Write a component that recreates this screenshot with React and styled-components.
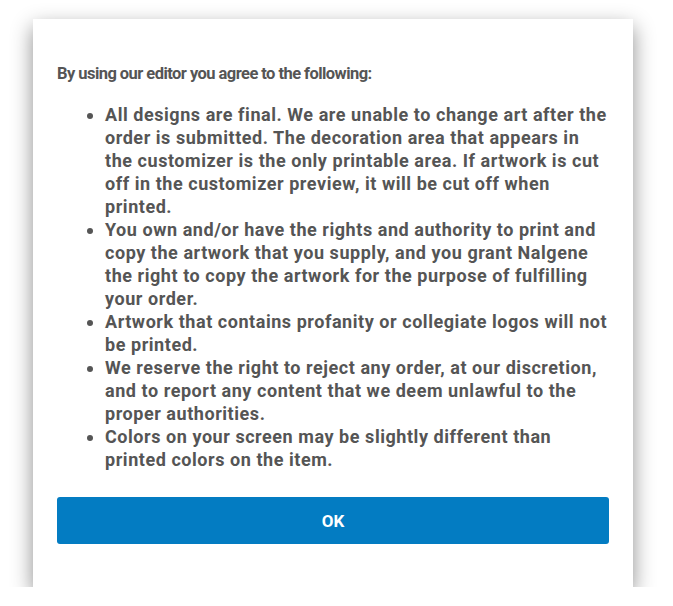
import React from "react";
import styled, { createGlobalStyle } from "styled-components";

const terms = [
  "All designs are final. We are unable to change art after the order is submitted. The decoration area that appears in the customizer is the only printable area. If artwork is cut off in the customizer preview, it will be cut off when printed.",
  "You own and/or have the rights and authority to print and copy the artwork that you supply, and you grant Nalgene the right to copy the artwork for the purpose of fulfilling your order.",
  "Artwork that contains profanity or collegiate logos will not be printed.",
  "We reserve the right to reject any order, at our discretion, and to report any content that we deem unlawful to the proper authorities.",
  "Colors on your screen may be slightly different than printed colors on the item.",
];

const App = () => {
  return (
    <>
      <GlobalStyle />
      <Page>
        <Modal>
          <Heading>By using our editor you agree to the following:</Heading>
          <TermsList>
            {terms.map((term, index) => (
              <TermItem key={index}>{term}</TermItem>
            ))}
          </TermsList>
          <OkButton type="button">OK</OkButton>
        </Modal>
      </Page>
    </>
  );
};

const GlobalStyle = createGlobalStyle`
  body {
    margin: 0;
    background: #ffffff;
    font-family: Roboto, "Liberation Sans", sans-serif;
  }
`;

const Page = styled.div`
  padding: 19px 0 0 33px;
`;

const Modal = styled.div`
  width: 600px;
  height: 568px;
  box-sizing: border-box;
  padding: 45px 24px 0 24px;
  background: #ffffff;
  box-shadow: 0 8px 20px rgba(0, 0, 0, 0.45);
`;

const Heading = styled.p`
  margin: 0;
  font-size: 16.5px;
  font-weight: 700;
  line-height: 20px;
  letter-spacing: -0.55px;
  color: #555555;
`;

const TermsList = styled.ul`
  margin: 19px 0 0;
  padding-left: 48px;
  list-style: disc;
  color: #555555;
`;

const TermItem = styled.li`
  font-size: 18px;
  font-weight: 700;
  line-height: 23px;
  letter-spacing: 0.55px;
`;

const OkButton = styled.button`
  display: block;
  width: 100%;
  height: 47px;
  margin-top: 26px;
  border: none;
  border-radius: 3px;
  background: #037cc2;
  color: #ffffff;
  font-family: Roboto, "Liberation Sans", sans-serif;
  font-size: 17px;
  font-weight: 700;
  cursor: pointer;
`;

export default App;
